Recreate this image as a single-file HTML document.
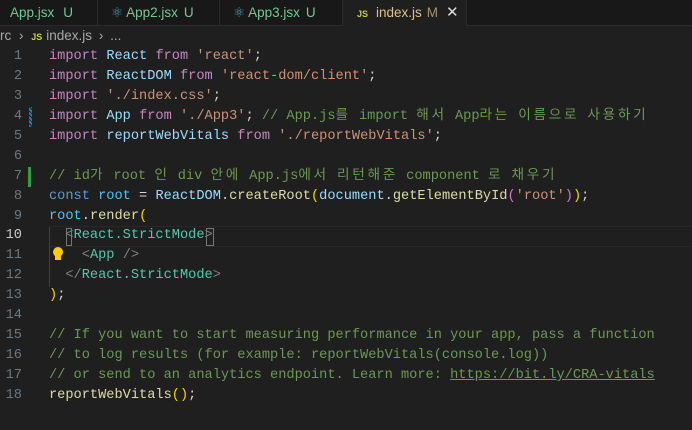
<!DOCTYPE html>
<html><head><meta charset="utf-8"><style>
*{margin:0;padding:0;box-sizing:border-box}
body{width:692px;height:430px;background:#1f1f1f;overflow:hidden;font-family:"Liberation Sans",sans-serif;position:relative}
.tabs{position:absolute;left:0;top:0;width:692px;height:26px;background:#181818;border-bottom:1px solid #2b2b2b}
.tab{position:absolute;top:0;height:26px;border-right:1px solid #2b2b2b;font-size:13.5px;line-height:25px;color:#73c991;white-space:nowrap}
.tab .u{margin-left:9px;color:#73c991}
.active{background:#1f1f1f;color:#e2c08d;height:27px}
.js{color:#cbcb41;font-weight:bold;font-size:9px;margin-right:8px}
.bc{position:absolute;top:27px;left:0;height:20px;font-size:13.5px;color:#a9a9a9;line-height:18px}
.code{position:absolute;left:0;top:47px;width:692px;font-family:"Liberation Mono","Noto Sans CJK KR",monospace;font-size:13.65px}
.ln{height:19.94px;line-height:19.94px;white-space:pre;position:relative}
.n{position:absolute;left:0;width:22px;text-align:right;color:#6e7681}
.c{position:absolute;left:49px;color:#d4d4d4}
.k{color:#c586c0}.v{color:#9cdcfe}.s{color:#ce9178}.m{color:#6a9955}.f{color:#dcdcaa}.b{color:#569cd6}.t{color:#4ec9b0}.g{color:#808080}.y{color:#ffd700}.p{color:#da70d6}
.ko{letter-spacing:2.7px}
</style></head><body>
<div class="tabs">
<div class="tab" style="left:0;width:98px;padding-left:10px">App.jsx<span class="u">U</span></div>
<div class="tab" style="left:98px;width:122px;padding-left:13px"><span style="color:#519aba">⚛</span> App2.jsx<span class="u" style="margin-left:6px">U</span></div>
<div class="tab" style="left:220px;width:123px;padding-left:13px"><span style="color:#519aba">⚛</span> App3.jsx<span class="u" style="margin-left:6px">U</span></div>
<div class="tab active" style="left:343px;width:124px;padding-left:14px"><span class="js">JS</span>index.js<span style="color:#a89070;margin-left:5px">M</span><span style="color:#ddd;margin-left:8px;font-size:15px">✕</span></div>
</div>
<div class="bc">rc <span style="margin:0 4px">›</span> <span class="js" style="margin-right:4px">JS</span>index.js <span style="margin:0 3px">›</span> ...</div>
<div style="position:absolute;left:29px;top:107px;width:3px;height:20px;background:repeating-linear-gradient(45deg,#1b81a8 0 2px,#1f1f1f 2px 3px)"></div>
<div style="position:absolute;left:28px;top:167px;width:3px;height:20px;background:#2ea043"></div>
<div style="position:absolute;left:49px;top:226px;width:643px;height:21px;border:1px solid #282828;border-right:none"></div>
<div style="position:absolute;left:49px;top:227px;width:1px;height:60px;background:#404040"></div>
<div style="position:absolute;left:66px;top:228px;width:6px;height:18px;border:1px solid #777"></div>
<div style="position:absolute;left:206px;top:228px;width:8px;height:18px;border:1px solid #777"></div>
<div style="position:absolute;left:53px;top:247px;width:10px;height:10px;border-radius:50%;background:#ffcc00"></div>
<div style="position:absolute;left:55px;top:255px;width:6px;height:5px;background:#ffcc00"></div>
<div class="code">
<div class="ln"><span class="n">1</span><span class="c"><span class="k">import</span> <span class="v">React</span> <span class="k">from</span> <span class="s">'react'</span>;</span></div>
<div class="ln"><span class="n">2</span><span class="c"><span class="k">import</span> <span class="v">ReactDOM</span> <span class="k">from</span> <span class="s">'react-dom/client'</span>;</span></div>
<div class="ln"><span class="n">3</span><span class="c"><span class="k">import</span> <span class="s">'./index.css'</span>;</span></div>
<div class="ln"><span class="n">4</span><span class="c"><span class="k">import</span> <span class="v">App</span> <span class="k">from</span> <span class="s">'./App3'</span>; <span class="m">// App.js<span class="ko">를</span> import <span class="ko">해서</span> App<span class="ko">라는</span> <span class="ko">이름으로</span> <span class="ko">사용하기</span></span></span></div>
<div class="ln"><span class="n">5</span><span class="c"><span class="k">import</span> <span class="v">reportWebVitals</span> <span class="k">from</span> <span class="s">'./reportWebVitals'</span>;</span></div>
<div class="ln"><span class="n">6</span></div>
<div class="ln"><span class="n">7</span><span class="c m">// id<span class="ko">가</span> root <span class="ko">인</span> div <span class="ko">안에</span> App.js<span class="ko">에서</span> <span class="ko">리턴해준</span> component <span class="ko">로</span> <span class="ko">채우기</span></span></div>
<div class="ln"><span class="n">8</span><span class="c"><span class="b">const</span> <span class="v" style="color:#4fc1ff">root</span> = <span class="v">ReactDOM</span>.<span class="f">createRoot</span><span class="y">(</span><span class="v">document</span>.<span class="f">getElementById</span><span class="p">(</span><span class="s">'root'</span><span class="p">)</span><span class="y">)</span>;</span></div>
<div class="ln"><span class="n">9</span><span class="c"><span class="v" style="color:#4fc1ff">root</span>.<span class="f">render</span><span class="y">(</span></span></div>
<div class="ln"><span class="n" style="color:#ccc">10</span><span class="c">  <span class="g">&lt;</span><span class="t">React.StrictMode</span><span class="g">&gt;</span></span></div>
<div class="ln"><span class="n">11</span><span class="c">    <span class="g">&lt;</span><span class="t">App</span> <span class="g">/&gt;</span></span></div>
<div class="ln"><span class="n">12</span><span class="c">  <span class="g">&lt;/</span><span class="t">React.StrictMode</span><span class="g">&gt;</span></span></div>
<div class="ln"><span class="n">13</span><span class="c"><span class="y">)</span>;</span></div>
<div class="ln"><span class="n">14</span></div>
<div class="ln"><span class="n">15</span><span class="c m">// If you want to start measuring performance in your app, pass a function</span></div>
<div class="ln"><span class="n">16</span><span class="c m">// to log results (for example: reportWebVitals(console.log))</span></div>
<div class="ln"><span class="n">17</span><span class="c m">// or send to an analytics endpoint. Learn more: <u>https://bit.ly/CRA-vitals</u></span></div>
<div class="ln"><span class="n">18</span><span class="c"><span class="f">reportWebVitals</span><span class="y">()</span>;</span></div>
</div>
</body></html>
